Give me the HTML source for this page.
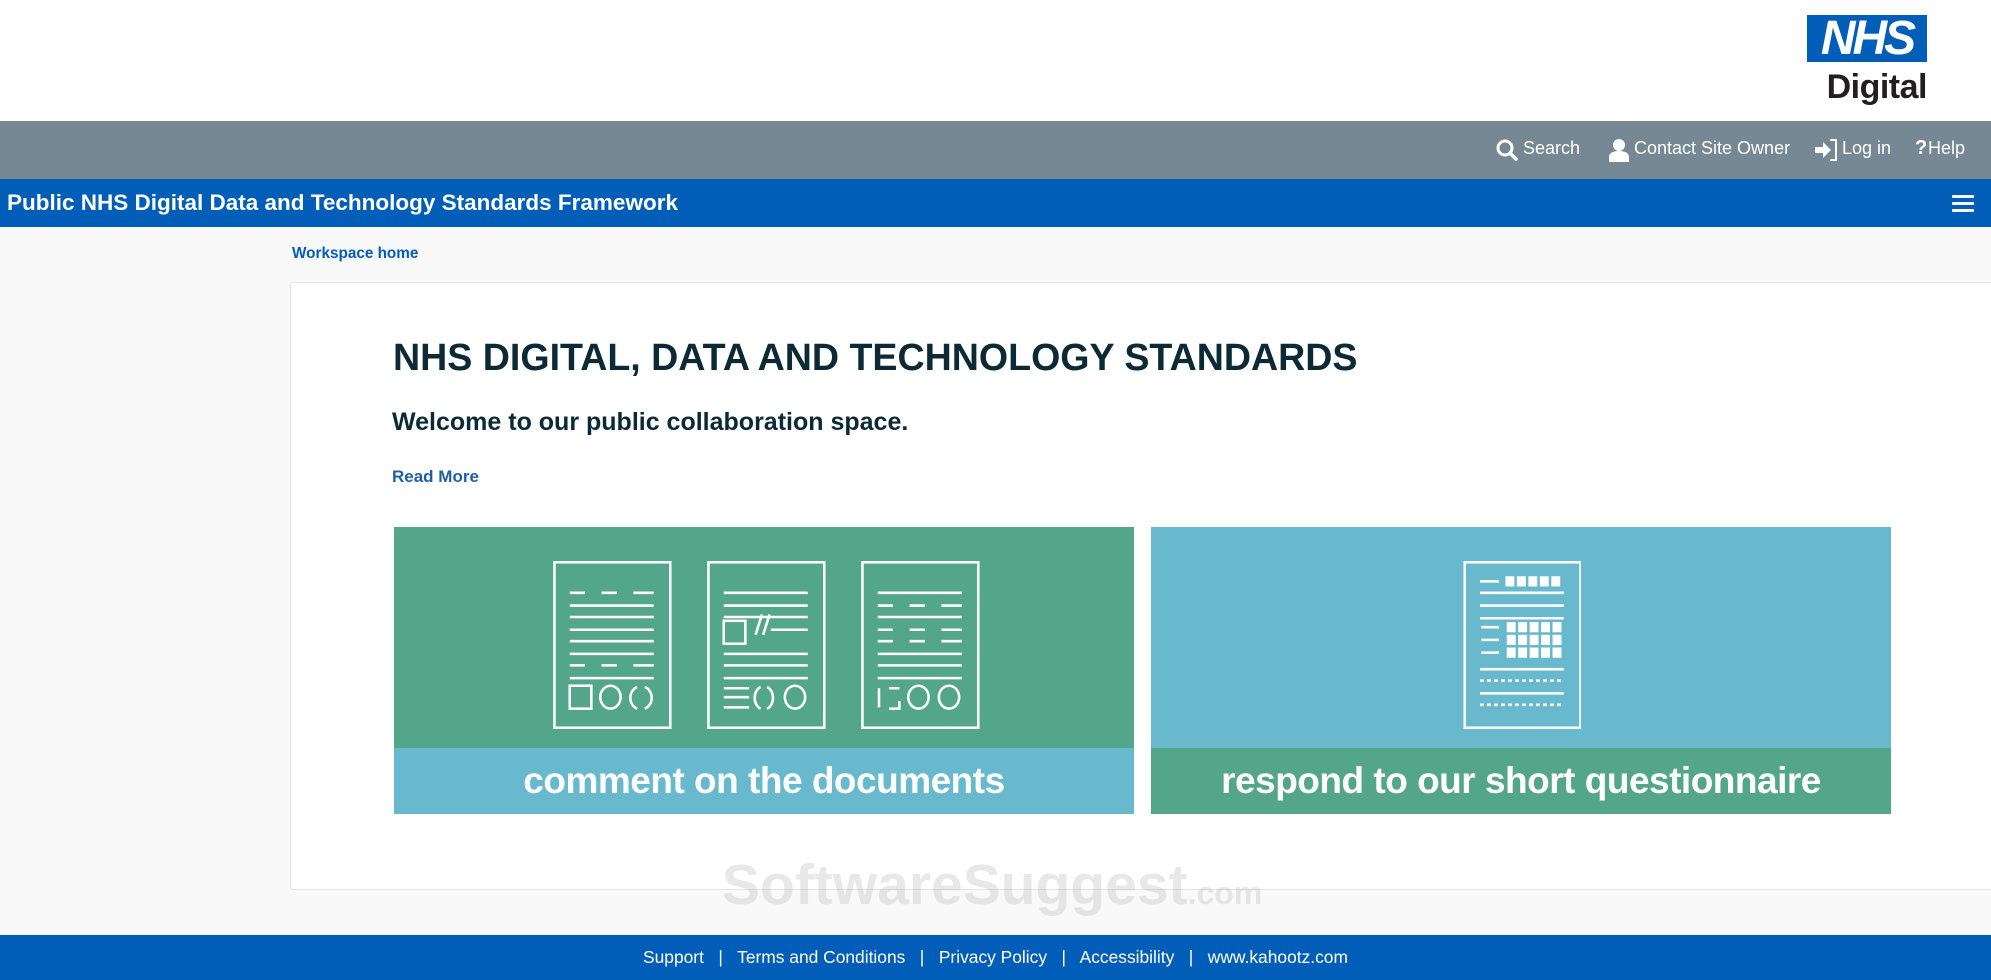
<!DOCTYPE html>
<html><head><meta charset="utf-8"><style>
*{margin:0;padding:0;box-sizing:border-box}
body{width:1991px;height:980px;overflow:hidden;background:#f9f9f9;font-family:"Liberation Sans",Arial,sans-serif;position:relative}
.hdr{position:absolute;left:0;top:0;width:1991px;height:121px;background:#fff}
.logo{position:absolute;left:1807px;top:15px;width:120px;height:47px;background:#005EB8;color:#fff;font:italic bold 48px/47px "Liberation Sans",sans-serif;text-align:center;letter-spacing:-3px}
.dig{position:absolute;left:1826px;top:68px;width:101px;text-align:right;font:bold 34px "Liberation Sans",sans-serif;color:#231f20;letter-spacing:-0.5px}
.gray{position:absolute;left:0;top:121px;width:1991px;height:58px;background:#778895;color:#fff;font-size:18px}
.gray span{position:absolute;top:17px}
.blue{position:absolute;left:0;top:179px;width:1991px;height:48px;background:#005EB8;color:#fff}
.blue .t{position:absolute;left:7px;top:11px;font-weight:bold;font-size:22.5px;white-space:nowrap}
.ham{position:absolute;left:1952px;top:195px;width:22px}
.ham i{display:block;height:3px;background:#fff;margin-bottom:4px;border-radius:1px}
.bc{position:absolute;left:292px;top:245px;font-size:15.3px;font-weight:bold;color:#005EB8}
.card{position:absolute;left:290px;top:282px;width:1710px;height:608px;background:#fff;border:1px solid #e4e4e4;border-radius:3px}
h1{position:absolute;left:393px;top:336px;font-size:37.6px;font-weight:bold;color:#0b2a36;white-space:nowrap}
.wel{position:absolute;left:392px;top:408px;font-size:25px;font-weight:bold;color:#0b2a36;white-space:nowrap}
.rm{position:absolute;left:392px;top:467px;font-size:17px;font-weight:bold;color:#1f5fa8}
.tile{position:absolute;top:527px;width:740px;height:287px}
.tile .top{position:absolute;left:0;top:0;width:100%;height:221px}
.tile .bot{position:absolute;left:0;top:221px;width:100%;height:66px;color:#fff;font:bold 37px/66px "Liberation Sans",sans-serif;text-align:center;letter-spacing:-0.5px}
.g{background:#54A68A}.b{background:#68B8CE}
.wm{position:absolute;left:722px;top:852px;font:bold 57px "Liberation Sans",sans-serif;color:rgba(180,180,180,.3)}
.wm small{font-size:32px}
.ft{position:absolute;left:0;top:935px;width:1991px;height:45px;background:#005EB8;color:#fff;font-size:17.4px;text-align:center;line-height:45px}
</style></head><body>
<div class="hdr"><div class="logo">NHS</div><div class="dig">Digital</div></div>
<div class="gray">
<svg style="position:absolute;left:1495px;top:17px" width="24" height="24" viewBox="0 0 24 24"><circle cx="10" cy="10" r="7" fill="none" stroke="#fff" stroke-width="3"/><path d="M15 15l6 6" stroke="#fff" stroke-width="3.5" stroke-linecap="round"/></svg>
<span style="left:1523px">Search</span>
<svg style="position:absolute;left:1609px;top:17px" width="20" height="24" viewBox="0 0 20 24"><circle cx="10" cy="7" r="6" fill="#fff"/><path d="M0 24v-5c0-4 4-6 10-6s10 2 10 6v5z" fill="#fff"/></svg>
<span style="left:1634px">Contact Site Owner</span>
<svg style="position:absolute;left:1815px;top:18px" width="24" height="22" viewBox="0 0 24 22"><path d="M0 8h8V3l8 8-8 8v-5H0z" fill="#fff"/><path d="M15 1h6v20h-6" fill="none" stroke="#fff" stroke-width="2"/></svg>
<span style="left:1842px">Log in</span>
<span style="left:1915px;font-weight:bold;font-size:20px;top:16px">?</span>
<span style="left:1928px">Help</span>
</div>
<div class="blue"><div class="t">Public NHS Digital Data and Technology Standards Framework</div></div>
<div class="ham"><i></i><i></i><i></i></div>
<div class="bc">Workspace home</div>
<div class="card"></div>
<h1>NHS DIGITAL, DATA AND TECHNOLOGY STANDARDS</h1>
<div class="wel">Welcome to our public collaboration space.</div>
<div class="rm">Read More</div>

<div class="tile" style="left:394px">
<div class="top g">
<svg style="position:absolute;left:157px;top:34px" width="432" height="168" viewBox="0 0 336 132" fill="none" stroke="#fff" stroke-width="2">
<g><rect x="1" y="1" width="91" height="130"/>
<path d="M13 25h12M38 25h12M63 25h16M13 35h66M13 44h66M13 54h66M13 63h66M13 73h66M13 82h12M38 82h12M63 82h16M13 92h66"/>
<rect x="13" y="98" width="17" height="18"/><ellipse cx="45" cy="107" rx="8" ry="9"/><path d="M66 99a8 9 0 0 0 0 17M72 99a8 9 0 0 1 0 17"/></g>
<g transform="translate(121,0)"><rect x="1" y="1" width="91" height="130"/>
<path d="M13 25h66M13 35h66M13 44h66M38 58l5-16M44 58l5-16M50 54h29M13 73h66M13 82h66M13 92h66M13 100h20M13 107h20M13 115h20"/>
<rect x="13" y="47" width="17" height="18"/><path d="M42 99a7 9 0 0 0 0 17M47 99a7 9 0 0 1 0 17"/><ellipse cx="69" cy="107" rx="8" ry="9"/></g>
<g transform="translate(242,0)"><rect x="1" y="1" width="91" height="130"/>
<path d="M13 25h66M13 35h12M38 35h12M63 35h16M13 44h66M13 54h12M38 54h12M63 54h16M13 63h12M38 63h12M63 63h16M13 73h66M13 82h66M13 92h66M14 100v15M22 100h8M30 110v6h-8"/>
<ellipse cx="45" cy="107" rx="8" ry="9"/><ellipse cx="69" cy="107" rx="8" ry="9"/></g>
</svg></div>
<div class="bot b">comment on the documents</div>
</div>

<div class="tile" style="left:1151px">
<div class="top b">
<svg style="position:absolute;left:312px;top:34px" width="118" height="168" viewBox="0 0 92 132" fill="none" stroke="#fff" stroke-width="2">
<rect x="1" y="1" width="91" height="130"/>
<path d="M13 16h15M13 25h66M13 35h66M13 45h66M14 52h14M14 62h14M14 72h14M13 85h66M13 104h66"/>
<path d="M13 94h66M13 113h66" stroke-dasharray="3 2.5"/>
<g fill="#fff" stroke="none">
<rect x="33" y="12" width="7" height="8"/><rect x="42" y="12" width="7" height="8"/><rect x="51" y="12" width="7" height="8"/><rect x="60" y="12" width="7" height="8"/><rect x="69" y="12" width="7" height="8"/>
<rect x="34" y="48" width="7" height="8"/><rect x="43" y="48" width="7" height="8"/><rect x="52" y="48" width="7" height="8"/><rect x="61" y="48" width="7" height="8"/><rect x="70" y="48" width="7" height="8"/>
<rect x="34" y="58" width="7" height="8"/><rect x="43" y="58" width="7" height="8"/><rect x="52" y="58" width="7" height="8"/><rect x="61" y="58" width="7" height="8"/><rect x="70" y="58" width="7" height="8"/>
<rect x="34" y="68" width="7" height="8"/><rect x="43" y="68" width="7" height="8"/><rect x="52" y="68" width="7" height="8"/><rect x="61" y="68" width="7" height="8"/><rect x="70" y="68" width="7" height="8"/>
</g>
</svg></div>
<div class="bot g">respond to our short questionnaire</div>
</div>

<div class="wm">SoftwareSuggest<small>.com</small></div>
<div class="ft">Support &nbsp; | &nbsp; Terms and Conditions &nbsp; | &nbsp; Privacy Policy &nbsp; | &nbsp; Accessibility &nbsp; | &nbsp; www.kahootz.com</div>
</body></html>
